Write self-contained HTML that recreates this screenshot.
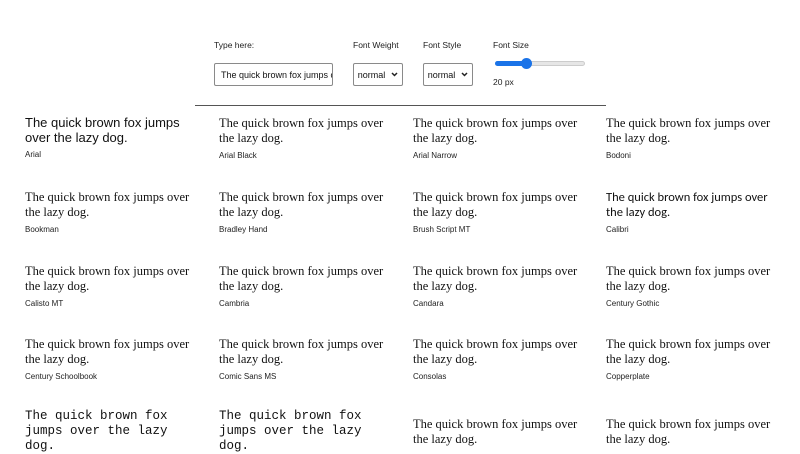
<!DOCTYPE html>
<html><head><meta charset="utf-8"><style>
body{margin:0;width:800px;height:450px;overflow:hidden;background:#fff;font-family:"Liberation Sans",sans-serif;color:#111;position:relative}
.lbl{position:absolute;font-size:8.5px;color:#222}
.inp{position:absolute;top:62px;height:23px;border:1px solid #8a8a8a;border-radius:2px;box-sizing:border-box;font-size:9px;display:flex;align-items:center;background:#fff}
.sel{justify-content:center}
.sel span{margin-right:6px}
.hr{position:absolute;left:195px;top:105px;width:411px;height:1px;background:#555}
.c{position:absolute;width:168px}
.t{font-size:12.5px;line-height:15px}
.n{font-size:8px;margin-top:5px;color:#222;font-family:"Liberation Sans",sans-serif}
.s{font-family:"Liberation Sans",sans-serif;font-size:13px}
.r{font-family:"Liberation Serif",serif}
.m{font-family:"Liberation Mono",monospace}
.k{font-family:"Carlito","DejaVu Sans",sans-serif;font-size:12.5px}
</style></head><body>
<div class="lbl" style="left:214px;top:40px">Type here:</div>
<div class="lbl" style="left:353px;top:40px">Font Weight</div>
<div class="lbl" style="left:423px;top:40px">Font Style</div>
<div class="lbl" style="left:493px;top:40px">Font Size</div>
<div class="inp" style="left:214px;width:119px;padding-left:6px;overflow:hidden;white-space:nowrap;top:63px">The quick brown fox jumps c</div>
<div class="inp sel" style="left:353px;width:50px;top:63px"><span>normal</span><svg width="7" height="5" viewBox="0 0 7 5"><path d="M1 1l2.5 2.5L6 1" stroke="#222" stroke-width="1.5" fill="none"/></svg></div>
<div class="inp sel" style="left:423px;width:50px;top:63px"><span>normal</span><svg width="7" height="5" viewBox="0 0 7 5"><path d="M1 1l2.5 2.5L6 1" stroke="#222" stroke-width="1.5" fill="none"/></svg></div>
<div style="position:absolute;left:495px;top:61px;width:90px;height:5px;border-radius:3px;background:#e6e6e6;border:1px solid #ccc;box-sizing:border-box"></div>
<div style="position:absolute;left:495px;top:61px;width:32px;height:5px;border-radius:3px;background:#1a73e8"></div>
<div style="position:absolute;left:521px;top:58px;width:11px;height:11px;border-radius:50%;background:#1a73e8"></div>
<div class="lbl" style="left:493px;top:77px">20 px</div>
<div class="hr"></div>

<div class="c" style="left:25px;top:115px"><div class="t s">The quick brown fox jumps over the lazy dog.</div><div class="n">Arial</div></div>
<div class="c" style="left:219px;top:116px"><div class="t r">The quick brown fox jumps over the lazy dog.</div><div class="n">Arial Black</div></div>
<div class="c" style="left:413px;top:116px"><div class="t r">The quick brown fox jumps over the lazy dog.</div><div class="n">Arial Narrow</div></div>
<div class="c" style="left:606px;top:116px"><div class="t r">The quick brown fox jumps over the lazy dog.</div><div class="n">Bodoni</div></div>

<div class="c" style="left:25px;top:190px"><div class="t r">The quick brown fox jumps over the lazy dog.</div><div class="n">Bookman</div></div>
<div class="c" style="left:219px;top:190px"><div class="t r">The quick brown fox jumps over the lazy dog.</div><div class="n">Bradley Hand</div></div>
<div class="c" style="left:413px;top:190px"><div class="t r">The quick brown fox jumps over the lazy dog.</div><div class="n">Brush Script MT</div></div>
<div class="c" style="left:606px;top:190px;width:172px"><div class="t k">The quick brown fox jumps over the lazy dog.</div><div class="n">Calibri</div></div>

<div class="c" style="left:25px;top:264px"><div class="t r">The quick brown fox jumps over the lazy dog.</div><div class="n">Calisto MT</div></div>
<div class="c" style="left:219px;top:264px"><div class="t r">The quick brown fox jumps over the lazy dog.</div><div class="n">Cambria</div></div>
<div class="c" style="left:413px;top:264px"><div class="t r">The quick brown fox jumps over the lazy dog.</div><div class="n">Candara</div></div>
<div class="c" style="left:606px;top:264px"><div class="t r">The quick brown fox jumps over the lazy dog.</div><div class="n">Century Gothic</div></div>

<div class="c" style="left:25px;top:337px"><div class="t r">The quick brown fox jumps over the lazy dog.</div><div class="n">Century Schoolbook</div></div>
<div class="c" style="left:219px;top:337px"><div class="t r">The quick brown fox jumps over the lazy dog.</div><div class="n">Comic Sans MS</div></div>
<div class="c" style="left:413px;top:337px"><div class="t r">The quick brown fox jumps over the lazy dog.</div><div class="n">Consolas</div></div>
<div class="c" style="left:606px;top:337px"><div class="t r">The quick brown fox jumps over the lazy dog.</div><div class="n">Copperplate</div></div>

<div class="c" style="left:25px;top:409px"><div class="t m">The quick brown fox jumps over the lazy dog.</div></div>
<div class="c" style="left:219px;top:409px"><div class="t m">The quick brown fox jumps over the lazy dog.</div></div>
<div class="c" style="left:413px;top:417px"><div class="t r">The quick brown fox jumps over the lazy dog.</div></div>
<div class="c" style="left:606px;top:417px"><div class="t r">The quick brown fox jumps over the lazy dog.</div></div>
</body></html>
